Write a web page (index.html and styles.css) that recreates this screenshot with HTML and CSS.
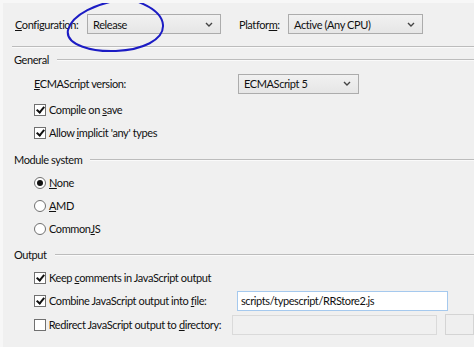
FILE: index.html
```html
<!DOCTYPE html>
<html>
<head>
<meta charset="utf-8">
<link rel="stylesheet" href="styles.css">
</head>
<body>
<div class="page">
  <div class="topbar">
    <span class="lbl cfg-lbl"><u>C</u>onfiguration:</span>
    <div class="combo cfg-combo"><span>Release</span><svg class="chev" width="8" height="5" viewBox="0 0 8 5"><path d="M1 1 L4 4 L7 1" fill="none" stroke="#444" stroke-width="1.4"/></svg></div>
    <span class="lbl plat-lbl">Platfor<u>m</u>:</span>
    <div class="combo plat-combo"><span>Active (Any CPU)</span><svg class="chev" width="8" height="5" viewBox="0 0 8 5"><path d="M1 1 L4 4 L7 1" fill="none" stroke="#444" stroke-width="1.4"/></svg></div>
  </div>
  <div class="sep"></div>

  <div class="group-head g-general"><span>General</span><div class="gline"></div></div>
  <div class="row ecma-row">
    <span class="lbl ecma-lbl"><u>E</u>CMAScript version:</span>
    <div class="combo ecma-combo"><span>ECMAScript 5</span><svg class="chev" width="8" height="5" viewBox="0 0 8 5"><path d="M1 1 L4 4 L7 1" fill="none" stroke="#444" stroke-width="1.4"/></svg></div>
  </div>
  <div class="row after-ecma"><span class="cb checked"></span><span class="lbl">Compile on <u>s</u>ave</span></div>
  <div class="row"><span class="cb checked"></span><span class="lbl">Allow <u>i</u>mplicit 'any' types</span></div>

  <div class="group-head g-module"><span>Module system</span><div class="gline"></div></div>
  <div class="row first"><span class="rb on"></span><span class="lbl"><u>N</u>one</span></div>
  <div class="row"><span class="rb"></span><span class="lbl"><u>A</u>MD</span></div>
  <div class="row"><span class="rb"></span><span class="lbl">Common<u>J</u>S</span></div>

  <div class="group-head g-output"><span>Output</span><div class="gline"></div></div>
  <div class="row first"><span class="cb checked"></span><span class="lbl">Keep <u>c</u>omments in JavaScript output</span></div>
  <div class="row"><span class="cb checked"></span><span class="lbl wide">Combine JavaScript output into <u>f</u>ile:</span><div class="tbox focus">scripts/typescript/RRStore2.js</div></div>
  <div class="row redirect"><span class="cb"></span><span class="lbl wide">Redirect JavaScript output to <u>d</u>irectory:</span><div class="tbox disabled"></div><div class="browse"></div></div>

  <svg class="annot" width="200" height="60" viewBox="0 0 200 60">
    <path d="M121 0 C 98 3, 72 14, 68 30 C 65 45, 92 52, 116 51 C 142 50, 164 40, 163 25 C 162 12, 148 5, 133 0" fill="none" stroke="#1c1cc4" stroke-width="2" stroke-linecap="round"/>
    <path d="M116 0 L 123 0 L 120 3 Z" fill="#1c1cc4"/>
  </svg>
</div>
</body>
</html>
```
FILE: styles.css
```css
html, body {
  margin: 0;
  padding: 0;
  background: #f0f0f0;
}
.page {
  position: relative;
  width: 474px;
  height: 347px;
  overflow: hidden;
  box-sizing: border-box;
  border-left: 3px solid #f7f7f7;
  border-top: 3px solid #f7f7f7;
  font-family: "Lato", "Open Sans", sans-serif;
  font-size: 11px;
  letter-spacing: -0.4px;
  color: #111;
}
.lbl { white-space: nowrap; }
u { text-decoration: underline; text-underline-offset: 1px; }
.topbar {
  display: flex;
  align-items: center;
  height: 20px;
  margin-top: 11px;
  padding-left: 12px;
}
.cfg-lbl { width: 72px; }
.combo {
  box-sizing: border-box;
  height: 20px;
  border: 1px solid #acacac;
  background: linear-gradient(#f1f1f1, #e6e6e6);
  display: flex;
  align-items: center;
  justify-content: space-between;
  padding: 0 7px 0 5px;
}
.cfg-combo { width: 134px; }
.plat-lbl { margin-left: 18px; width: 49px; }
.plat-combo { width: 135px; }
.sep {
  margin: 12px 0 0 9px;
  height: 0;
  border-top: 1px solid #bcbcbc;
  border-bottom: 1px solid #fafafa;
}
.group-head {
  display: flex;
  align-items: center;
  height: 22px;
  padding-left: 11px;
}
.g-general { margin-top: 0; }
.g-module { margin-top: 4px; }
.g-output { margin-top: 3px; }
.group-head span { margin-right: 8px; }
.gline {
  flex: 1;
  border-top: 1px solid #bcbcbc;
  border-bottom: 1px solid #fafafa;
  margin-top: 2px;
}
.row {
  display: flex;
  align-items: center;
  height: 23px;
  padding-left: 31px;
}
.ecma-row { margin-top: 2px; }
.after-ecma { margin-top: 3px; }
.row.first { margin-top: 1px; }
.redirect { margin-top: 1px; }
.ecma-lbl { width: 204px; }
.ecma-combo { width: 121px; }
.cb {
  box-sizing: border-box;
  width: 12px;
  height: 12px;
  border: 1px solid #707070;
  background: #fff;
  margin-right: 3px;
  position: relative;
}
.cb.checked::after {
  content: "";
  position: absolute;
  left: 2.5px;
  top: 0px;
  width: 3px;
  height: 6px;
  border: solid #111;
  border-width: 0 2px 2px 0;
  transform: rotate(40deg);
}
.rb {
  box-sizing: border-box;
  width: 12px;
  height: 12px;
  border: 1px solid #707070;
  border-radius: 50%;
  background: #fff;
  margin-right: 3px;
  display: flex;
  align-items: center;
  justify-content: center;
}
.rb.on::after {
  content: "";
  width: 6px;
  height: 6px;
  border-radius: 50%;
  background: #111;
}
.wide { width: 188px; }
.tbox {
  box-sizing: border-box;
  width: 211px;
  height: 20px;
  border: 1px solid #a5c9ee;
  background: #fff;
  padding-left: 3px;
  display: flex;
  align-items: center;
}
.tbox.disabled {
  border-color: #dadada;
  background: #f0f0f0;
}
.browse {
  box-sizing: border-box;
  width: 30px;
  height: 21px;
  margin-left: 8px;
  border: 1px solid #d4d4d4;
  background: #efefef;
}
.annot {
  position: absolute;
  left: -3px;
  top: -3px;
}
```
